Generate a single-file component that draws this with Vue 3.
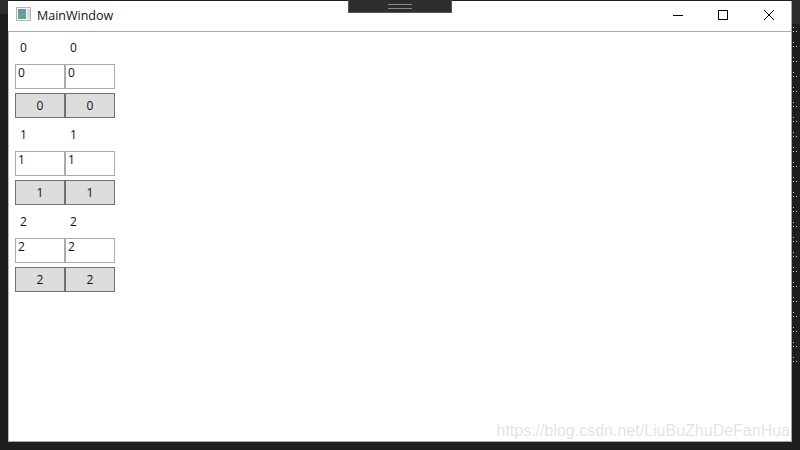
<script setup>
const groups = [0, 1, 2]
const cols = [0, 1]
</script>

<template>
  <div class="desktop">
    <div class="corner left"></div>
    <div class="corner right"></div>
    <div class="edge-dots">
      <div v-for="n in 23" :key="n" class="dots">
        <i class="first"></i><i></i><i></i>
      </div>
    </div>
    <div class="window">
      <header class="titlebar">
        <svg class="app-icon" width="16" height="16" viewBox="0 0 16 16">
          <rect x="0.5" y="0.5" width="14" height="13" fill="#fbfbfb" stroke="#b4b4b4" />
          <rect x="2" y="2" width="8" height="10" fill="#5fa596" />
          <rect x="2" y="2" width="8" height="4" fill="#6f8fae" />
          <rect x="11" y="2" width="3" height="10" fill="#cfdedb" />
        </svg>
        <span class="title">MainWindow</span>
        <div class="controls">
          <button class="ctl">
            <svg width="13" height="13" viewBox="0 0 13 13"><path d="M1 5.5h10" stroke="#000" fill="none" /></svg>
          </button>
          <button class="ctl">
            <svg width="13" height="13" viewBox="0 0 13 13"><rect x="1.5" y="0.5" width="9" height="9" stroke="#000" fill="none" /></svg>
          </button>
          <button class="ctl">
            <svg width="13" height="13" viewBox="0 0 13 13"><path d="M2 0l10 10M12 0L2 10" stroke="#000" fill="none" /></svg>
          </button>
        </div>
      </header>
      <main class="content">
        <section v-for="g in groups" :key="g" class="group">
          <div class="row labels">
            <span v-for="c in cols" :key="c" class="label">{{ g }}</span>
          </div>
          <div class="row">
            <div v-for="c in cols" :key="c" class="box">{{ g }}</div>
          </div>
          <div class="row">
            <button v-for="c in cols" :key="c" class="btn">{{ g }}</button>
          </div>
        </section>
      </main>
      <div class="watermark">https://blog.csdn.net/LiuBuZhuDeFanHua</div>
    </div>
    <div class="handle"><span></span></div>
  </div>
</template>

<style>
html, body {
  margin: 0;
  background: #1e1e1e;
}
</style>

<style scoped>
.desktop {
  position: relative;
  width: 800px;
  height: 450px;
  padding: 1px 8px 0;
  box-sizing: border-box;
  background: #1e1e1e;
  overflow: hidden;
  font-family: "Open Sans", "Noto Sans", sans-serif;
}
.corner {
  position: absolute;
  top: 0;
  width: 8px;
  background: #2d2d30;
}
.corner.left {
  left: 0;
  height: 14px;
}
.corner.right {
  right: 0;
  height: 24px;
}
.window {
  position: relative;
  height: 441px;
  background: #fff;
  border-right: 1px solid #a6a6ac;
  border-bottom: 1px solid #a6a6ac;
  box-sizing: border-box;
}
.titlebar {
  display: flex;
  align-items: center;
  height: 31px;
  box-sizing: border-box;
  border-bottom: 1px solid #ababab;
  padding-left: 8px;
}
.app-icon {
  margin-right: 5px;
  position: relative;
  top: -1px;
}
.title {
  font-size: 12.5px;
  color: #111;
  position: relative;
  top: -1px;
}
.controls {
  margin-left: auto;
  display: flex;
  align-self: flex-start;
}
.ctl {
  width: 45px;
  height: 30px;
  padding: 9px 0 0;
  border: 0;
  background: none;
  display: flex;
  align-items: flex-start;
  justify-content: center;
}
.content {
  height: 409px;
  box-sizing: border-box;
  padding: 3px 0 0 6px;
  border-left: 1px solid #b8b8bc;
}
.group {
  height: 87px;
}
.row {
  display: flex;
  width: 100px;
}
.labels {
  height: 25px;
  margin-bottom: 4px;
}
.label {
  width: 50px;
  padding: 5px 0 0 5px;
  box-sizing: border-box;
  font-size: 12px;
  line-height: 16px;
  color: #111;
}
.box {
  width: 50px;
  height: 25px;
  padding-left: 2px;
  margin-bottom: 4px;
  box-sizing: border-box;
  border: 1px solid #ababab;
  background: #fff;
  font-size: 12px;
  line-height: 16px;
  color: #111;
}
.btn {
  width: 50px;
  height: 25px;
  padding: 0;
  box-sizing: border-box;
  border: 1px solid #707070;
  border-radius: 0;
  background: #dddddd;
  font-family: inherit;
  font-size: 12px;
  color: #111;
}
.watermark {
  position: absolute;
  right: 1px;
  bottom: 0;
  font-family: "Liberation Sans", sans-serif;
  font-size: 16px;
  line-height: 20px;
  color: rgba(120, 120, 120, 0.22);
  white-space: nowrap;
}
.handle {
  position: absolute;
  left: 348px;
  top: 0;
  width: 104px;
  height: 13px;
  box-sizing: border-box;
  background: #2d2d30;
  border: 1px solid #555;
  border-top: 0;
  display: flex;
  align-items: center;
  justify-content: center;
}
.handle span {
  width: 24px;
  height: 3px;
  border-top: 1px solid #888;
  border-bottom: 1px solid #888;
}
.edge-dots {
  position: absolute;
  left: 793px;
  top: 27px;
}
.dots {
  display: grid;
  grid-template-columns: 1px 1px;
  column-gap: 2px;
  height: 15px;
  align-content: start;
}
.dots i {
  width: 1px;
  height: 1px;
  background: #ddd;
}
.dots .first {
  grid-column: 1 / 3;
  margin-bottom: 3px;
}
</style>
